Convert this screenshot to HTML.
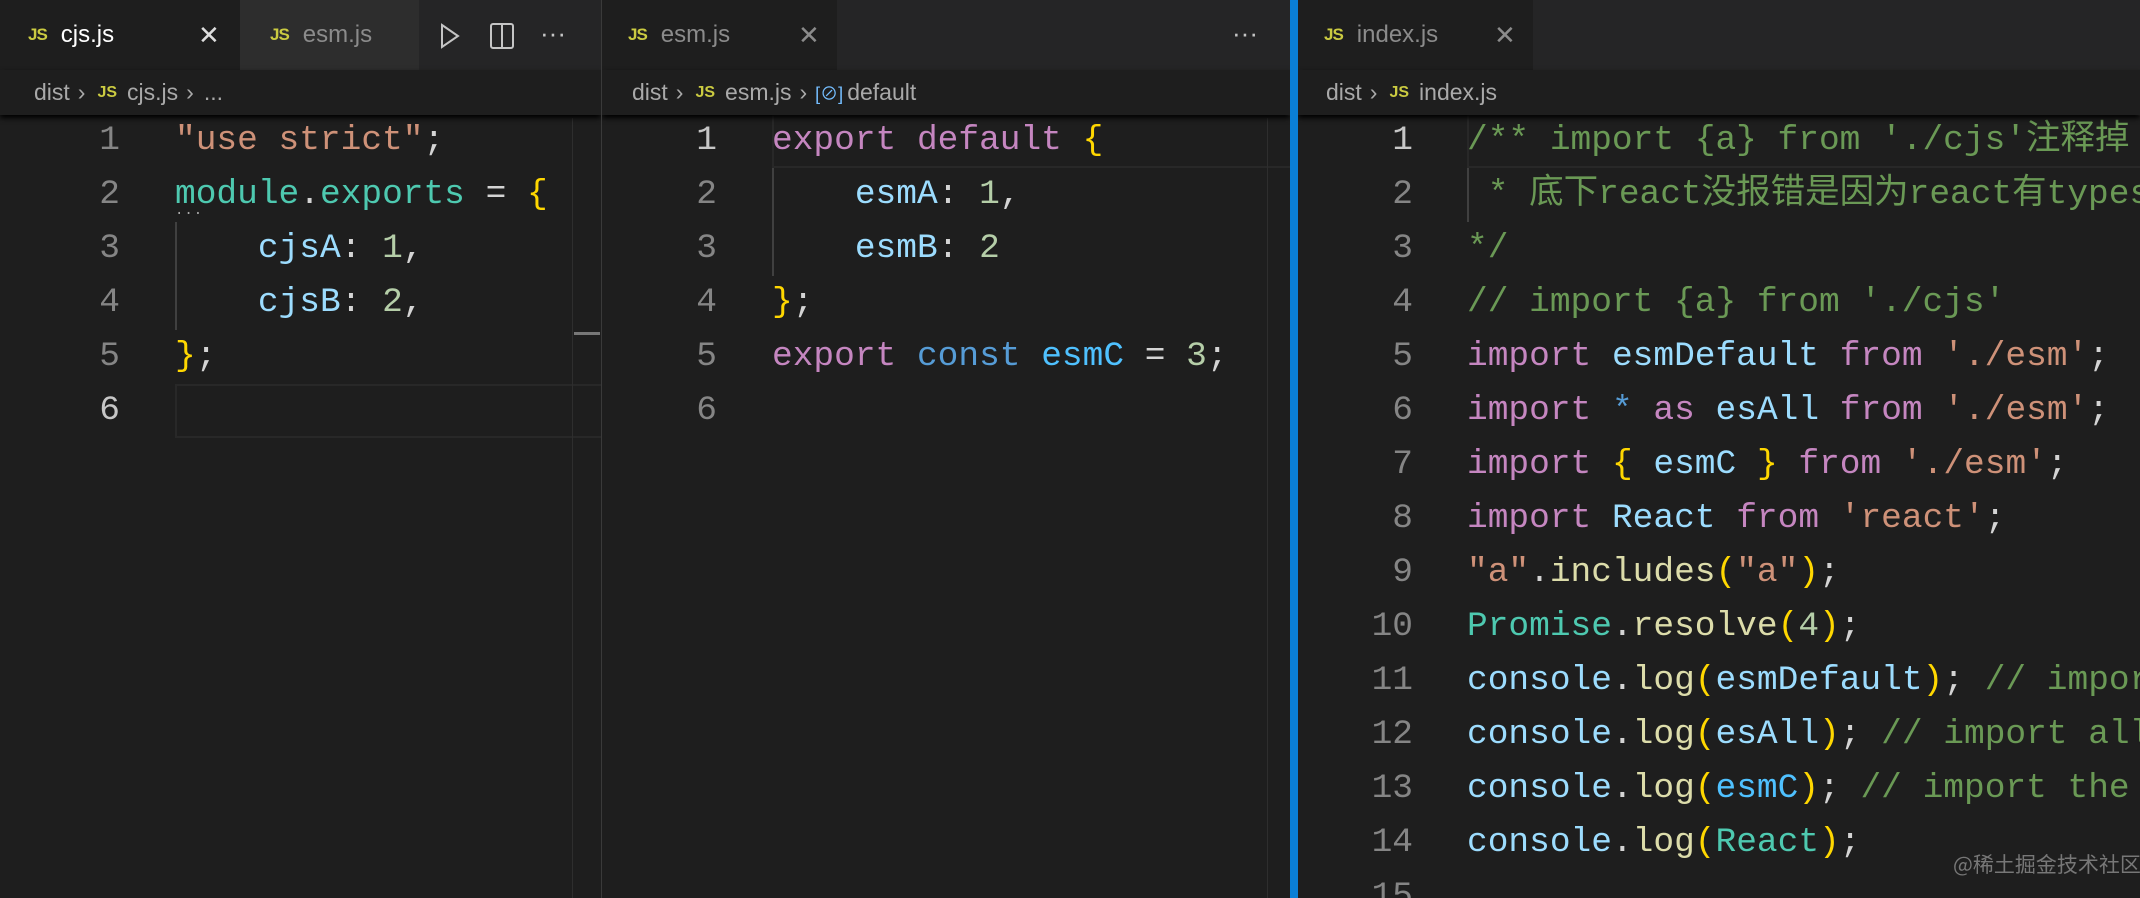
<!DOCTYPE html>
<html><head><meta charset="utf-8"><style>
*{margin:0;padding:0;box-sizing:border-box}
body{width:2140px;height:898px;background:#1e1e1e;overflow:hidden;position:relative;font-family:"Liberation Sans","Noto Sans CJK SC",sans-serif}
.pane{position:absolute;top:0;height:898px;overflow:hidden;background:#1e1e1e}
.tabbar{position:absolute;left:0;top:0;right:0;height:70px;background:#252526}
.tab{position:absolute;top:0;height:70px;display:flex;align-items:center;font-size:24px;color:#8b8b8b}
.tab .js{color:#cbcb41;font-weight:bold;font-size:17px;margin-right:14px;letter-spacing:-1px}
.tab .x{position:absolute;font-size:26px;color:#8b8b8b}
.bc{position:absolute;left:0;right:0;top:70px;height:45px;display:flex;align-items:center;font-size:23px;color:#a9a9a9;background:#1e1e1e;box-shadow:0 3px 5px #000;z-index:2}
.bc .js{color:#cbcb41;font-weight:bold;font-size:16px;margin:0 10px 0 12px}
.bc .ch{margin-left:8px;color:#a9a9a9}
.code{position:absolute;left:0;right:0;top:118px;bottom:0;font-family:"Liberation Mono","Noto Sans CJK SC",monospace;font-size:34.5px}
.ln{position:absolute;height:54px;line-height:54px;text-align:right;color:#858585;width:60px}
.ln.a{color:#c6c6c6}
.l{position:absolute;height:54px;line-height:54px;white-space:pre;color:#d4d4d4}
.cur{position:absolute;height:54px;border:2px solid #282828}
.g{position:absolute;width:2px;background:#404040}
.k{color:#c586c0}.v{color:#9cdcfe}.s{color:#ce9178}.n{color:#b5cea8}.c{color:#6a9955}.b{color:#569cd6}.f{color:#dcdcaa}.t{color:#4ec9b0}.y{color:#ffd700}.cc{color:#4fc1ff}
</style></head><body>

<!-- pane 1 -->
<div class="pane" style="left:0;width:601px">
 <div class="tabbar"></div>
 <div class="tab" style="left:0;width:240px;background:#1e1e1e;padding-left:28px;color:#fff"><span class="js">JS</span>cjs.js<span class="x" style="left:198px;color:#ddd">✕</span></div>
 <div class="tab" style="left:240px;width:179px;background:#2d2d2d;padding-left:30px"><span class="js">JS</span>esm.js</div>
 <svg style="position:absolute;left:437px;top:22px" width="26" height="28" viewBox="0 0 26 28"><path d="M5 3 L21 14 L5 25 Z" fill="none" stroke="#c5c5c5" stroke-width="2"/></svg>
 <svg style="position:absolute;left:489px;top:22px" width="26" height="28" viewBox="0 0 26 28"><rect x="2" y="2" width="22" height="24" rx="2" fill="none" stroke="#c5c5c5" stroke-width="2"/><line x1="13" y1="2" x2="13" y2="26" stroke="#c5c5c5" stroke-width="2"/></svg>
 <div style="position:absolute;left:540px;top:18px;color:#c5c5c5;font-size:26px">···</div>
 <div class="bc"><span style="margin-left:34px">dist</span><span class="ch">›</span><span class="js">JS</span>cjs.js<span class="ch">›</span><span style="margin-left:10px">...</span></div>
 <div class="code">
  <div class="cur" style="left:175px;top:266px;width:440px"></div>
  <div class="g" style="left:175px;top:104px;height:108px"></div>
  <div style="position:absolute;left:572px;top:0;width:1px;height:800px;background:#2e2e2e"></div>
  <div style="position:absolute;left:574px;top:214px;width:26px;height:3px;background:#777"></div>
  <div class="ln" style="left:60px;top:-4px">1</div><div class="l" style="left:175px;top:-4px"><span class="s">"use strict"</span>;</div>
  <div class="ln" style="left:60px;top:50px">2</div><div class="l" style="left:175px;top:50px"><span class="t">module</span>.<span class="t">exports</span> = <span class="y">{</span></div>
  <div style="position:absolute;left:175px;top:88px;color:#aaa;font-size:14px;letter-spacing:1px">···</div>
  <div class="ln" style="left:60px;top:104px">3</div><div class="l" style="left:175px;top:104px">    <span class="v">cjsA</span>: <span class="n">1</span>,</div>
  <div class="ln" style="left:60px;top:158px">4</div><div class="l" style="left:175px;top:158px">    <span class="v">cjsB</span>: <span class="n">2</span>,</div>
  <div class="ln" style="left:60px;top:212px">5</div><div class="l" style="left:175px;top:212px"><span class="y">}</span>;</div>
  <div class="ln a" style="left:60px;top:266px">6</div>
 </div>
</div>
<div style="position:absolute;left:601px;top:0;width:1px;height:898px;background:#3a3a3a"></div>

<!-- pane 2 -->
<div class="pane" style="left:602px;width:688px">
 <div class="tabbar"></div>
 <div class="tab" style="left:0;width:235px;background:#1e1e1e;padding-left:26px"><span class="js">JS</span>esm.js<span class="x" style="left:196px">✕</span></div>
 <div style="position:absolute;left:630px;top:18px;color:#c5c5c5;font-size:26px">···</div>
 <div class="bc"><span style="margin-left:30px">dist</span><span class="ch">›</span><span class="js">JS</span>esm.js<span class="ch">›</span><span style="margin-left:8px;color:#75beff;font-size:18px">[⊘]</span><span style="margin-left:4px">default</span></div>
 <div class="code">
  <div class="cur" style="left:170px;top:-4px;width:530px"></div>
  <div class="g" style="left:170px;top:50px;height:108px"></div>
  <div style="position:absolute;left:665px;top:0;width:1px;height:800px;background:#2e2e2e"></div>
  <div class="ln a" style="left:55px;top:-4px">1</div><div class="l" style="left:170px;top:-4px"><span class="k">export</span> <span class="k">default</span> <span class="y">{</span></div>
  <div class="ln" style="left:55px;top:50px">2</div><div class="l" style="left:170px;top:50px">    <span class="v">esmA</span>: <span class="n">1</span>,</div>
  <div class="ln" style="left:55px;top:104px">3</div><div class="l" style="left:170px;top:104px">    <span class="v">esmB</span>: <span class="n">2</span></div>
  <div class="ln" style="left:55px;top:158px">4</div><div class="l" style="left:170px;top:158px"><span class="y">}</span>;</div>
  <div class="ln" style="left:55px;top:212px">5</div><div class="l" style="left:170px;top:212px"><span class="k">export</span> <span class="b">const</span> <span class="cc">esmC</span> = <span class="n">3</span>;</div>
  <div class="ln" style="left:55px;top:266px">6</div>
 </div>
</div>
<div style="position:absolute;left:1290px;top:0;width:8px;height:898px;background:#0a7fd6"></div>

<!-- pane 3 -->
<div class="pane" style="left:1298px;width:842px">
 <div class="tabbar"></div>
 <div class="tab" style="left:0;width:235px;background:#1e1e1e;padding-left:26px"><span class="js">JS</span>index.js<span class="x" style="left:196px">✕</span></div>
 <div class="bc"><span style="margin-left:28px">dist</span><span class="ch">›</span><span class="js">JS</span>index.js</div>
 <div class="code">
  <div class="cur" style="left:169px;top:-4px;width:700px"></div>
  <div class="g" style="left:169px;top:50px;height:54px"></div>
  <div class="ln a" style="left:55px;top:-4px">1</div><div class="l c" style="left:169px;top:-4px">/** import {a} from './cjs'注释掉</div>
  <div class="ln" style="left:55px;top:50px">2</div><div class="l c" style="left:169px;top:50px"> * 底下react没报错是因为react有types</div>
  <div class="ln" style="left:55px;top:104px">3</div><div class="l c" style="left:169px;top:104px">*/</div>
  <div class="ln" style="left:55px;top:158px">4</div><div class="l c" style="left:169px;top:158px">// import {a} from './cjs'</div>
  <div class="ln" style="left:55px;top:212px">5</div><div class="l" style="left:169px;top:212px"><span class="k">import</span> <span class="v">esmDefault</span> <span class="k">from</span> <span class="s">'./esm'</span>;</div>
  <div class="ln" style="left:55px;top:266px">6</div><div class="l" style="left:169px;top:266px"><span class="k">import</span> <span class="b">*</span> <span class="k">as</span> <span class="v">esAll</span> <span class="k">from</span> <span class="s">'./esm'</span>;</div>
  <div class="ln" style="left:55px;top:320px">7</div><div class="l" style="left:169px;top:320px"><span class="k">import</span> <span class="y">{</span> <span class="v">esmC</span> <span class="y">}</span> <span class="k">from</span> <span class="s">'./esm'</span>;</div>
  <div class="ln" style="left:55px;top:374px">8</div><div class="l" style="left:169px;top:374px"><span class="k">import</span> <span class="v">React</span> <span class="k">from</span> <span class="s">'react'</span>;</div>
  <div class="ln" style="left:55px;top:428px">9</div><div class="l" style="left:169px;top:428px"><span class="s">"a"</span>.<span class="f">includes</span><span class="y">(</span><span class="s">"a"</span><span class="y">)</span>;</div>
  <div class="ln" style="left:55px;top:482px">10</div><div class="l" style="left:169px;top:482px"><span class="t">Promise</span>.<span class="f">resolve</span><span class="y">(</span><span class="n">4</span><span class="y">)</span>;</div>
  <div class="ln" style="left:55px;top:536px">11</div><div class="l" style="left:169px;top:536px"><span class="v">console</span>.<span class="f">log</span><span class="y">(</span><span class="v">esmDefault</span><span class="y">)</span>; <span class="c">// import default</span></div>
  <div class="ln" style="left:55px;top:590px">12</div><div class="l" style="left:169px;top:590px"><span class="v">console</span>.<span class="f">log</span><span class="y">(</span><span class="v">esAll</span><span class="y">)</span>; <span class="c">// import all</span></div>
  <div class="ln" style="left:55px;top:644px">13</div><div class="l" style="left:169px;top:644px"><span class="v">console</span>.<span class="f">log</span><span class="y">(</span><span class="cc">esmC</span><span class="y">)</span>; <span class="c">// import the</span></div>
  <div class="ln" style="left:55px;top:698px">14</div><div class="l" style="left:169px;top:698px"><span class="v">console</span>.<span class="f">log</span><span class="y">(</span><span class="t">React</span><span class="y">)</span>;</div>
  <div class="ln" style="left:55px;top:752px">15</div>
 </div>
 <div style="position:absolute;left:655px;top:849px;font-size:21px;color:#777;white-space:nowrap;font-family:'Noto Sans CJK SC',sans-serif">@稀土掘金技术社区</div>
</div>
</body></html>
